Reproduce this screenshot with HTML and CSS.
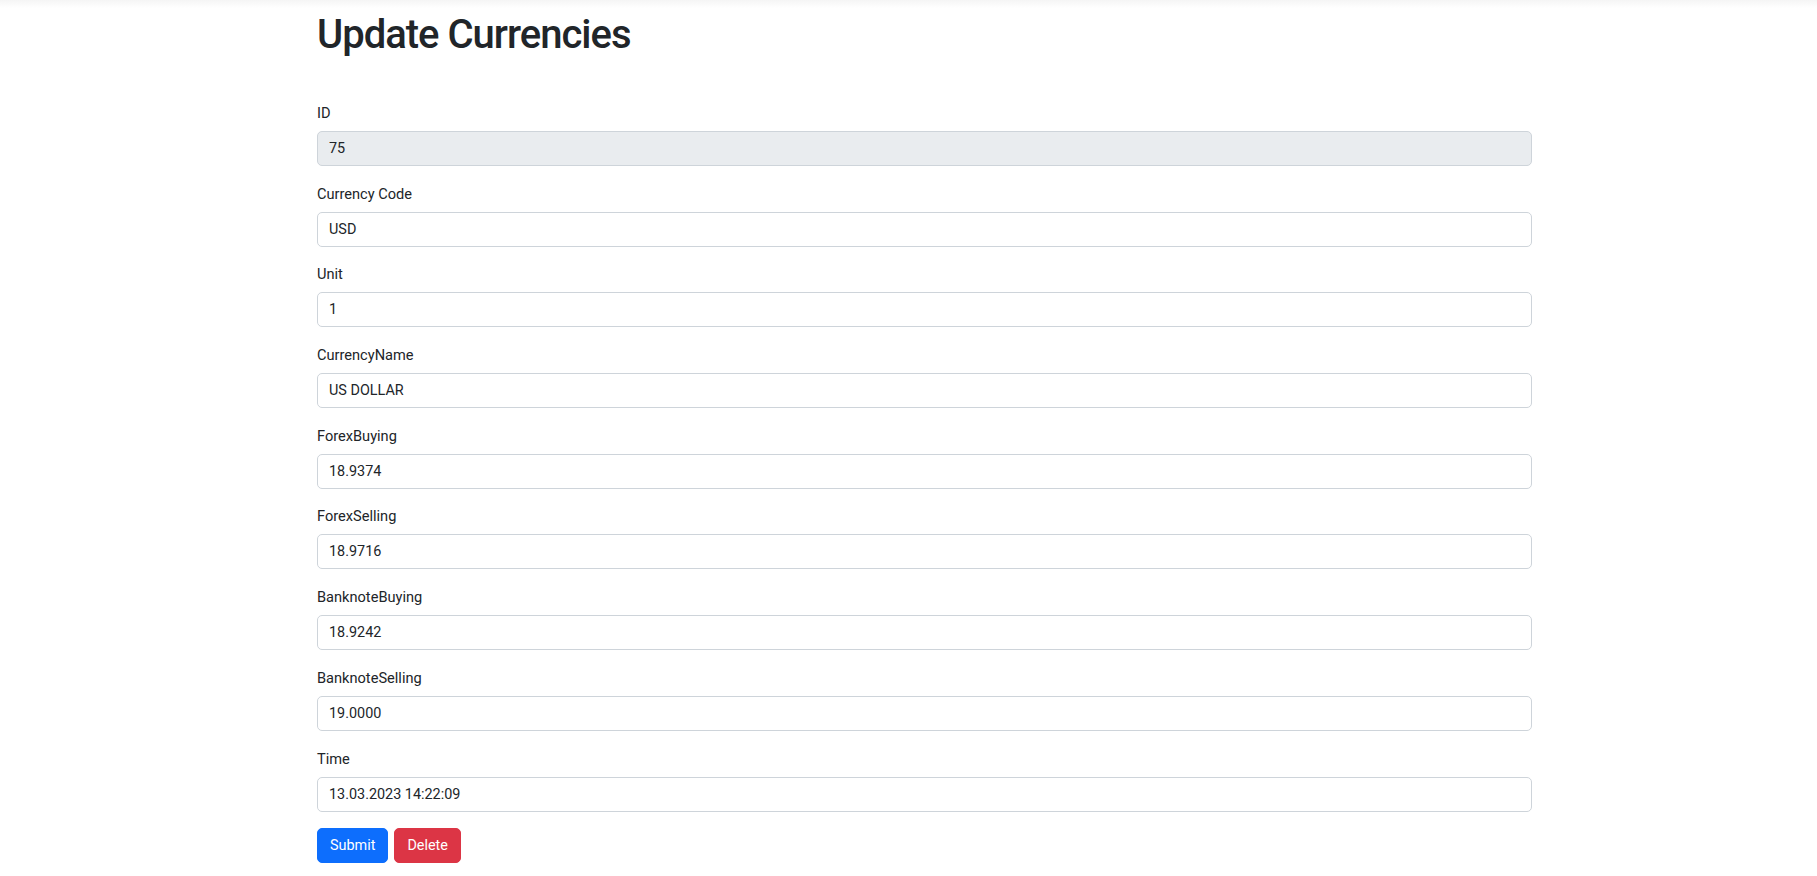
FILE: index.html
```html
<!DOCTYPE html>
<html lang="en">
<head>
<meta charset="UTF-8">
<title>Update Currencies</title>
<link rel="stylesheet" href="styles.css">
</head>
<body>

<div class="topbar"></div>

<div class="container">
  <h1>Update Currencies</h1>

  <form>
    <div class="field">
      <label for="id">ID</label>
      <input class="form-control" id="id" type="text" value="75" readonly>
    </div>
    <div class="field">
      <label for="code">Currency Code</label>
      <input class="form-control" id="code" type="text" value="USD">
    </div>
    <div class="field">
      <label for="unit">Unit</label>
      <input class="form-control" id="unit" type="text" value="1">
    </div>
    <div class="field">
      <label for="name">CurrencyName</label>
      <input class="form-control" id="name" type="text" value="US DOLLAR">
    </div>
    <div class="field">
      <label for="fxbuy">ForexBuying</label>
      <input class="form-control" id="fxbuy" type="text" value="18.9374">
    </div>
    <div class="field">
      <label for="fxsell">ForexSelling</label>
      <input class="form-control" id="fxsell" type="text" value="18.9716">
    </div>
    <div class="field">
      <label for="bnbuy">BanknoteBuying</label>
      <input class="form-control" id="bnbuy" type="text" value="18.9242">
    </div>
    <div class="field">
      <label for="bnsell">BanknoteSelling</label>
      <input class="form-control" id="bnsell" type="text" value="19.0000">
    </div>
    <div class="field">
      <label for="time">Time</label>
      <input class="form-control" id="time" type="text" value="13.03.2023 14:22:09">
    </div>

    <div class="actions">
      <button type="submit" class="btn btn-primary">Submit</button>
      <button type="button" class="btn btn-danger">Delete</button>
    </div>
  </form>
</div>

</body>
</html>
```

FILE: styles.css
```css
body {
  margin: 0;
  font-family: "Segoe UI", Roboto, "Noto Sans", sans-serif;
  color: #212529;
  background-color: #fff;
}

.topbar {
  height: 8px;
  background: linear-gradient(#f5f5f5, #fff);
}

.container {
  width: 1215px;
  margin-left: 317px;
  padding-top: 3px;
}

h1 {
  font-size: 40px;
  font-weight: 500;
  line-height: 48px;
  letter-spacing: -1px;
  margin: 0 0 43px;
}

.field {
  margin-bottom: 16.7px;
}

label {
  display: block;
  font-size: 14.6px;
  line-height: 22px;
  margin-bottom: 7px;
}

.form-control {
  display: block;
  box-sizing: border-box;
  width: 100%;
  height: 35px;
  padding: 6px 11px;
  font-family: inherit;
  font-size: 14.4px;
  line-height: 21px;
  color: #212529;
  background-color: #fff;
  border: 1px solid #ced4da;
  border-radius: 5px;
}

.form-control[readonly] {
  background-color: #e9ecef;
}

.actions {
  display: flex;
  gap: 6px;
}

.btn {
  height: 35px;
  padding: 6px 12px;
  font-family: inherit;
  font-size: 14.4px;
  line-height: 21px;
  color: #fff;
  border: 1px solid transparent;
  border-radius: 5px;
  cursor: pointer;
}

.btn-primary {
  background-color: #0d6efd;
  border-color: #0d6efd;
}

.btn-danger {
  background-color: #dc3545;
  border-color: #dc3545;
}
```
